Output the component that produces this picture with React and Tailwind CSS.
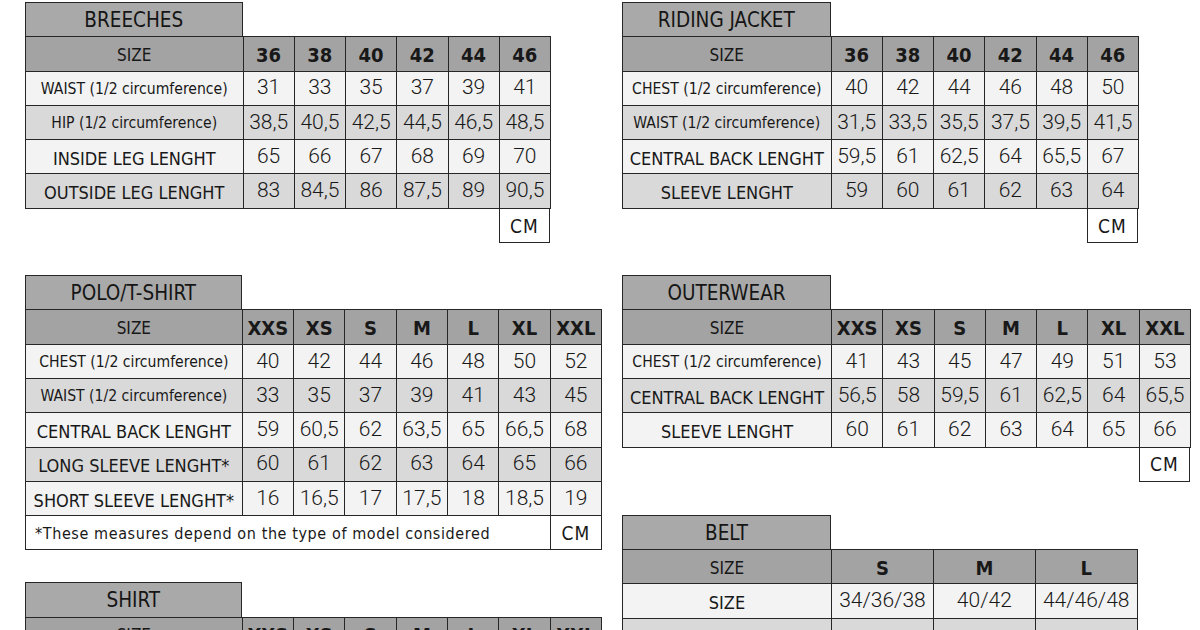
import React from "react";

const B = "border-[#262626]";

function Cell({ children, className = "" }) {
  return (
    <div className={`flex items-center justify-center border-r border-b ${B} whitespace-nowrap ${className}`}>
      {children}
    </div>
  );
}

function SizeTable({ title, labelW, cols, sizes, rows, cm, note }) {
  return (
    <div className="flex flex-col">
      <div
        className={`h-[34.3px] flex items-center justify-center border-l border-t border-r ${B} bg-[#a9a9a9] text-[20.5px] text-[#151515] pt-[1px]`}
        style={{ width: labelW }}
      >
        {title}
      </div>
      <div className={`grid auto-rows-[34.3px] border-l border-t ${B} w-fit`} style={{ gridTemplateColumns: `${labelW}px repeat(${sizes.length}, ${cols})` }}>
        <Cell className="bg-[#a3a3a3] text-[17px] pt-[3px]">SIZE</Cell>
        {sizes.map((s) => (
          <Cell key={s} className="bg-[#a3a3a3] text-[20px] font-bold pt-[2px]">
            {s}
          </Cell>
        ))}
        {rows.map((r, i) => {
          const bg = i % 2 === 0 ? "bg-[#f3f3f3]" : "bg-[#d9d9d9]";
          return (
            <React.Fragment key={i}>
              <Cell className={`${bg} ${r.small ? "text-[15.6px]" : "text-[18px]"} pt-[3px]`}>{r.label}</Cell>
              {r.values.map((v, j) => (
                <Cell key={j} className={`${bg} text-[21px] font-light font-['Roboto',sans-serif]`}>
                  {v}
                </Cell>
              ))}
            </React.Fragment>
          );
        })}
        {note && (
          <>
            <div
              className={`flex items-center pl-[9px] border-r border-b ${B} bg-white text-[16px] tracking-[0.6px] whitespace-nowrap pt-[2px]`}
              style={{ gridColumn: `1 / span ${sizes.length}` }}
            >
              {note}
            </div>
            <Cell className="bg-white text-[19px] tracking-[1px]">CM</Cell>
          </>
        )}
      </div>
      {cm && (
        <div className="flex justify-end">
          <div
            className={`h-[34.3px] flex items-center justify-center border-l border-r border-b ${B} bg-white text-[19px] tracking-[1px] pt-[1px]`}
            style={{ width: cm }}
          >
            CM
          </div>
        </div>
      )}
    </div>
  );
}

const circ = "(1/2 circumference)";

export default function App() {
  return (
    <div className="w-[1200px] h-[630px] overflow-hidden bg-white text-[#181818] font-['DejaVu_Sans_Condensed','DejaVu_Sans',sans-serif] flex">
      <div className="ml-[25px] w-[597px] flex flex-col pt-[2px] shrink-0">
        <div className="w-[525px]">
          <SizeTable
            title="BREECHES"
            labelW={217.5}
            cols="51.25px"
            cm="51.25px"
            sizes={["36", "38", "40", "42", "44", "46"]}
            rows={[
              { label: `WAIST ${circ}`, small: true, values: ["31", "33", "35", "37", "39", "41"] },
              { label: `HIP ${circ}`, small: true, values: ["38,5", "40,5", "42,5", "44,5", "46,5", "48,5"] },
              { label: "INSIDE LEG LENGHT", values: ["65", "66", "67", "68", "69", "70"] },
              { label: "OUTSIDE LEG LENGHT", values: ["83", "84,5", "86", "87,5", "89", "90,5"] },
            ]}
          />
        </div>
        <div className="mt-[32px]">
          <SizeTable
            title="POLO/T-SHIRT"
            labelW={216.7}
            cols="51.33px"
            sizes={["XXS", "XS", "S", "M", "L", "XL", "XXL"]}
            note="*These measures depend on the type of model considered"
            rows={[
              { label: `CHEST ${circ}`, small: true, values: ["40", "42", "44", "46", "48", "50", "52"] },
              { label: `WAIST ${circ}`, small: true, values: ["33", "35", "37", "39", "41", "43", "45"] },
              { label: "CENTRAL BACK LENGHT", values: ["59", "60,5", "62", "63,5", "65", "66,5", "68"] },
              { label: "LONG SLEEVE LENGHT*", values: ["60", "61", "62", "63", "64", "65", "66"] },
              { label: "SHORT SLEEVE LENGHT*", values: ["16", "16,5", "17", "17,5", "18", "18,5", "19"] },
            ]}
          />
        </div>
        <div className="mt-[32px]">
          <SizeTable
            title="SHIRT"
            labelW={216.7}
            cols="51.33px"
            sizes={["XXS", "XS", "S", "M", "L", "XL", "XXL"]}
            rows={[]}
          />
        </div>
      </div>
      <div className="w-[578px] flex flex-col pt-[2px] shrink-0">
        <div className="w-[516px]">
          <SizeTable
            title="RIDING JACKET"
            labelW={208.5}
            cols="51.25px"
            cm="51.25px"
            sizes={["36", "38", "40", "42", "44", "46"]}
            rows={[
              { label: `CHEST ${circ}`, small: true, values: ["40", "42", "44", "46", "48", "50"] },
              { label: `WAIST ${circ}`, small: true, values: ["31,5", "33,5", "35,5", "37,5", "39,5", "41,5"] },
              { label: "CENTRAL BACK LENGHT", values: ["59,5", "61", "62,5", "64", "65,5", "67"] },
              { label: "SLEEVE LENGHT", values: ["59", "60", "61", "62", "63", "64"] },
            ]}
          />
        </div>
        <div className="mt-[32px] w-[568px]">
          <SizeTable
            title="OUTERWEAR"
            labelW={209}
            cols="51.3px"
            cm="51.3px"
            sizes={["XXS", "XS", "S", "M", "L", "XL", "XXL"]}
            rows={[
              { label: `CHEST ${circ}`, small: true, values: ["41", "43", "45", "47", "49", "51", "53"] },
              { label: "CENTRAL BACK LENGHT", values: ["56,5", "58", "59,5", "61", "62,5", "64", "65,5"] },
              { label: "SLEEVE LENGHT", values: ["60", "61", "62", "63", "64", "65", "66"] },
            ]}
          />
        </div>
        <div className="mt-[33px]">
          <SizeTable
            title="BELT"
            labelW={209}
            cols="101.9px"
            sizes={["S", "M", "L"]}
            rows={[
              { label: "SIZE", values: ["34/36/38", "40/42", "44/46/48"] },
              { label: "", values: ["", "", ""] },
            ]}
          />
        </div>
      </div>
    </div>
  );
}
